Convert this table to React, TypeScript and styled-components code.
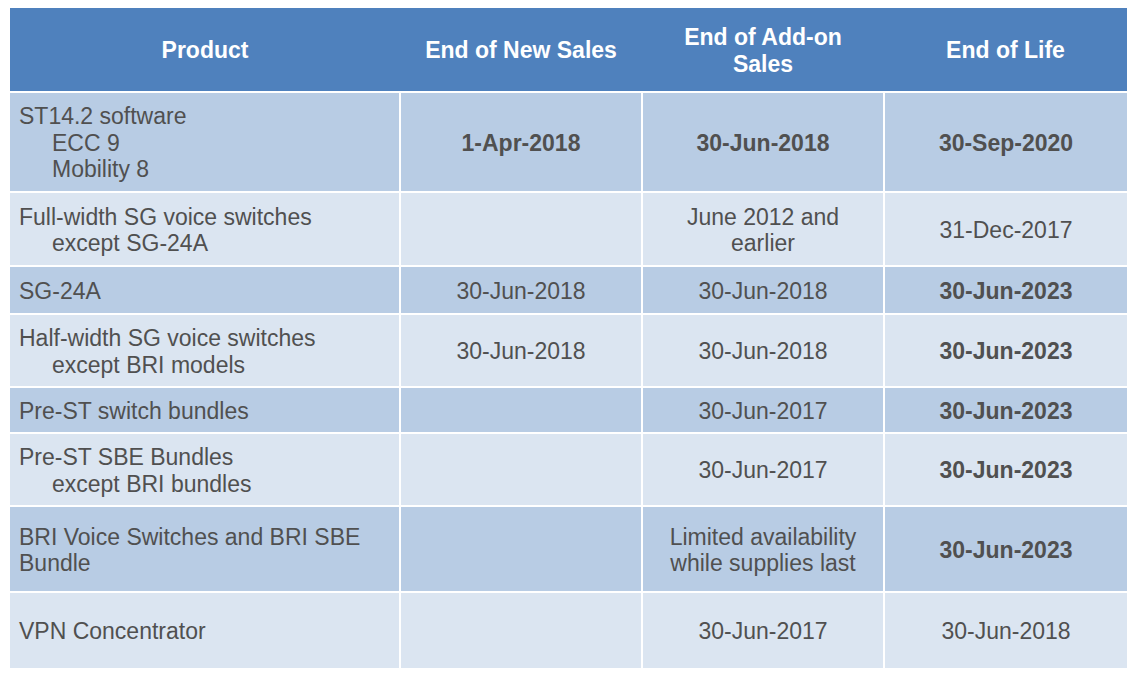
import React from 'react'
import styled, { createGlobalStyle } from 'styled-components'

const GlobalStyle = createGlobalStyle`
    html, body {
        margin: 0;
        padding: 0;
        background: #ffffff;
        font-family: "Liberation Sans", Arial, sans-serif;
    }
`

const Page = styled.div`
    padding: 8px 0 0 10px;
`

const Table = styled.table`
    width: 1117px;
    border-collapse: collapse;
    table-layout: fixed;
    font-family: "Liberation Sans", Arial, sans-serif;
    font-size: 23px;
    line-height: 26.5px;
    color: #505050;

    th, td {
        box-sizing: border-box;
    }
`

const HeadCell = styled.th<{ $w: number }>`
    width: ${p => p.$w}px;
    height: 84px;
    padding: 2px 4px 0;
    background: #4f81bd;
    color: #ffffff;
    font-weight: bold;
    text-align: center;
    vertical-align: middle;
    border-bottom: 2px solid #ffffff;
`

const Row = styled.tr<{ $h: number; $dark: boolean }>`
    height: ${p => p.$h}px;
    background: ${p => (p.$dark ? '#b8cce4' : '#dbe5f1')};
`

const Cell = styled.td<{ $bold?: boolean }>`
    padding: 2px 4px 0;
    border: 2px solid #ffffff;
    border-top: none;
    text-align: center;
    vertical-align: middle;
    font-weight: ${p => (p.$bold ? 'bold' : 'normal')};
    &:first-child { border-left: none; }
    &:last-child { border-right: none; }
`

const ProductCell = styled(Cell)`
    text-align: left;
    padding-left: 9px;
`

const Sub = styled.div`
    padding-left: 33px;
`

type Rec = {
    h: number
    product: React.ReactNode
    sales?: string
    addon: React.ReactNode
    life: string
    bold?: [boolean, boolean, boolean]
}

const rows: Rec[] = [
    {
        h: 100,
        product: <>ST14.2 software<Sub>ECC 9</Sub><Sub>Mobility 8</Sub></>,
        sales: '1-Apr-2018',
        addon: '30-Jun-2018',
        life: '30-Sep-2020',
        bold: [true, true, true],
    },
    {
        h: 74,
        product: <>Full-width SG voice switches<Sub>except SG-24A</Sub></>,
        addon: <>June 2012 and<br />earlier</>,
        life: '31-Dec-2017',
    },
    {
        h: 48,
        product: 'SG-24A',
        sales: '30-Jun-2018',
        addon: '30-Jun-2018',
        life: '30-Jun-2023',
        bold: [false, false, true],
    },
    {
        h: 73,
        product: <>Half-width SG voice switches<Sub>except BRI models</Sub></>,
        sales: '30-Jun-2018',
        addon: '30-Jun-2018',
        life: '30-Jun-2023',
        bold: [false, false, true],
    },
    {
        h: 46,
        product: 'Pre-ST switch bundles',
        addon: '30-Jun-2017',
        life: '30-Jun-2023',
        bold: [false, false, true],
    },
    {
        h: 73,
        product: <>Pre-ST SBE Bundles<Sub>except BRI bundles</Sub></>,
        addon: '30-Jun-2017',
        life: '30-Jun-2023',
        bold: [false, false, true],
    },
    {
        h: 86,
        product: <>BRI Voice Switches and BRI SBE<br />Bundle</>,
        addon: <>Limited availability<br />while supplies last</>,
        life: '30-Jun-2023',
        bold: [false, false, true],
    },
    {
        h: 77,
        product: 'VPN Concentrator',
        addon: '30-Jun-2017',
        life: '30-Jun-2018',
    },
]

export default function App() {
    return (
        <Page>
            <GlobalStyle />
            <Table>
                <thead>
                    <tr>
                        <HeadCell $w={390}>Product</HeadCell>
                        <HeadCell $w={242}>End of New Sales</HeadCell>
                        <HeadCell $w={242}>End of Add-on<br />Sales</HeadCell>
                        <HeadCell $w={243}>End of Life</HeadCell>
                    </tr>
                </thead>
                <tbody>
                    {rows.map((r, i) => {
                        const b = r.bold ?? [false, false, false]
                        return (
                            <Row key={i} $h={r.h} $dark={i % 2 === 0}>
                                <ProductCell>{r.product}</ProductCell>
                                <Cell $bold={b[0]}>{r.sales}</Cell>
                                <Cell $bold={b[1]}>{r.addon}</Cell>
                                <Cell $bold={b[2]}>{r.life}</Cell>
                            </Row>
                        )
                    })}
                </tbody>
            </Table>
        </Page>
    )
}
